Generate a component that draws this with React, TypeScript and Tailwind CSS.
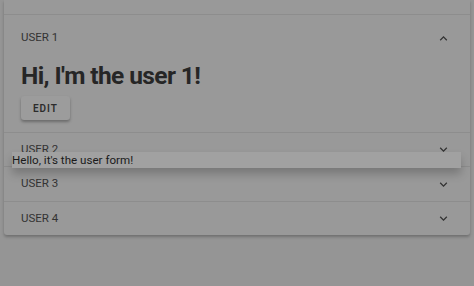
import React from "react";

const users = ["USER 1", "USER 2", "USER 3", "USER 4"];

function Chevron({ up }: { up?: boolean }) {
  return (
    <svg
      viewBox="0 0 24 24"
      className={`h-[15px] w-[15px] fill-[#333333] ${up ? "rotate-180" : ""}`}
    >
      <path d="M16.59 8.59 12 13.17 7.41 8.59 6 10l6 6 6-6z" />
    </svg>
  );
}

export default function App() {
  return (
    <div
      className="relative h-[286px] w-[474px] overflow-hidden bg-[#959595] text-[#333333]"
      style={{ fontFamily: "Roboto, sans-serif" }}
    >
      {/* Accordion paper */}
      <div className="ml-[4px] w-[466px] rounded-b-[3px] bg-[#999999] shadow-[0_2px_3px_rgba(0,0,0,0.25)]">
        <div className="h-[14px]" />

        {/* Expanded item */}
        <div className="border-t border-[#8d8d8d]">
          <div className="flex h-[46px] items-center justify-between pl-[17px] pr-[19px]">
            <span className="text-[11.5px] leading-none">{users[0]}</span>
            <Chevron up />
          </div>
          <div className="px-[17px] pb-[12px]">
            <h1 className="text-[24.5px] leading-[30px] font-bold tracking-[-0.6px] text-[#262626]">
              Hi, I'm the user 1!
            </h1>
            <button className="mt-[5px] flex h-[24px] w-[49px] items-center justify-center rounded-[3px] bg-[#9c9c9c] text-[10px] font-semibold tracking-[1px] text-[#2c2c2c] shadow-[0_2px_3px_rgba(0,0,0,0.3)]">
              EDIT
            </button>
          </div>
        </div>

        {users.slice(1).map((u, i) => (
          <div
            key={u}
            className={`flex items-center justify-between border-t border-[#8d8d8d] pl-[17px] pr-[19px] ${
              i === 1 ? "h-[35px]" : "h-[34px]"
            }`}
          >
            <span className="text-[11.5px] leading-none">{u}</span>
            <Chevron />
          </div>
        ))}
      </div>

      {/* Dialog */}
      <div className="absolute left-[12px] top-[152px] h-[16px] w-[449px] bg-[#a1a1a1] shadow-[0_6px_10px_rgba(0,0,0,0.22)]">
        <p className="text-[11.6px] leading-[16px] text-[#1a1a1a]">
          Hello, it's the user form!
        </p>
      </div>
    </div>
  );
}
